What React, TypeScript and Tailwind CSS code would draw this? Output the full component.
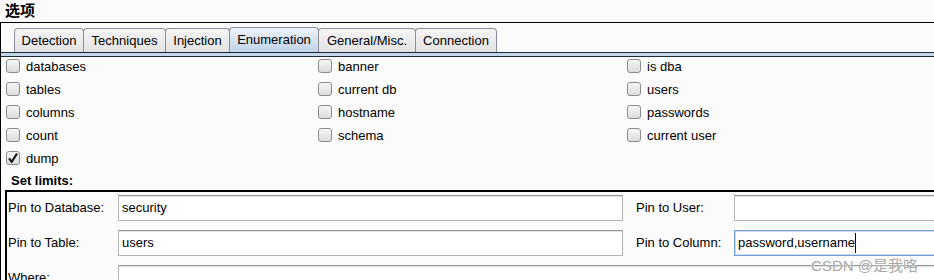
import React from "react"

const tabs = [
  { name: "Detection", w: "w-[70px]" },
  { name: "Techniques", w: "w-[83px]" },
  { name: "Injection", w: "w-[65px]" },
  { name: "Enumeration", w: "w-[90px]", active: true },
  { name: "General/Misc.", w: "w-[98px]" },
  { name: "Connection", w: "w-[82px]" },
]

const rows: [string, string | null, string | null][] = [
  ["databases", "banner", "is dba"],
  ["tables", "current db", "users"],
  ["columns", "hostname", "passwords"],
  ["count", "schema", "current user"],
  ["dump", null, null],
]

function CheckBox({ label, checked }: { label: string; checked?: boolean }) {
  return (
    <div className="flex items-center gap-[6px] h-[18px]">
      <span className="w-[14px] h-[14px] rounded-[3px] border border-[#8a8c90] bg-gradient-to-b from-[#f6f6f6] to-[#dcdcdc] flex items-center justify-center">
        {checked && (
          <svg width="12" height="12" viewBox="0 0 12 12">
            <path d="M2 6.4 L4.7 9.8 L10 1.6" fill="none" stroke="#151515" strokeWidth="2.1" />
          </svg>
        )}
      </span>
      <span className="text-[13px] leading-none text-black">{label}</span>
    </div>
  )
}

function Field({ value, focused, wide }: { value?: string; focused?: boolean; wide?: boolean }) {
  return (
    <div
      className={`h-[26px] bg-white flex items-center pl-[3px] text-[13px] text-black ${wide ? "col-span-3" : ""} ${
        focused
          ? "border border-[#6f9fd5] shadow-[inset_0_0_0_1px_#c9dcf0]"
          : "border border-[#b4b4b4] border-t-[#959595] shadow-[inset_0_1px_0_#e2e2e2]"
      }`}
    >
      <span className="whitespace-nowrap">{value}</span>
      {focused && <span className="w-px h-[20px] bg-black" />}
    </div>
  )
}

export default function App() {
  return (
    <div
      className="relative w-[934px] h-[280px] overflow-hidden bg-[#fbfbfb] text-black"
      style={{ fontFamily: '"Liberation Sans", Arial, "Noto Sans CJK SC", sans-serif' }}
    >
      <div className="h-[22px] pl-[5px] pt-[2px] text-[15px] font-bold leading-[18px]">选项</div>

      <div className="border-t border-l border-black">
        {/* tab strip */}
        <div className="h-[29px] flex items-end pl-[13px]">
          {tabs.map((t) => (
            <div
              key={t.name}
              className={`${t.w} -ml-px first:ml-0 flex items-center justify-center text-[13px] border border-b-0 border-[#8b8e96] rounded-t-[4px] ${
                t.active
                  ? "bg-gradient-to-b from-[#eef3f9] to-[#bfd3e8] h-[25px]"
                  : "bg-gradient-to-b from-[#f5f5f5] to-[#e2e2e2] h-[24px]"
              }`}
            >
              {t.name}
            </div>
          ))}
        </div>
        <div className="h-[5px] border-y border-[#1d2838] bg-[#c4d6e9]" />

        {/* enumeration options */}
        <div className="grid grid-cols-[312px_309px_1fr] gap-y-[5px] pl-[5px]">
          {rows.map(([a, b, c]) => (
            <React.Fragment key={a}>
              <CheckBox label={a} checked={a === "dump"} />
              {b ? <CheckBox label={b} /> : <div />}
              {c ? <CheckBox label={c} /> : <div />}
            </React.Fragment>
          ))}
        </div>

        <div className="h-[23px] pt-[5px] pl-[10px] text-[13px] font-bold leading-[18px]">Set limits:</div>

        <div className="ml-[4px] border-t-2 border-l-2 border-black pt-[3px] pl-[1px]">
          <div className="grid grid-cols-[110px_505px_111px_240px] gap-y-[9px] items-center">
            <span className="text-[13px] whitespace-nowrap">Pin to Database:</span>
            <Field value="security" />
            <span className="text-[13px] pl-[13px] whitespace-nowrap">Pin to User:</span>
            <Field />

            <span className="text-[13px] whitespace-nowrap">Pin to Table:</span>
            <Field value="users" />
            <span className="text-[13px] pl-[13px] whitespace-nowrap">Pin to Column:</span>
            <Field value="password,username" focused />

            <span className="text-[13px] whitespace-nowrap">Where:</span>
            <Field wide />
          </div>
        </div>
      </div>

      <div className="absolute right-[16px] bottom-[7px] text-[15px] leading-none text-[#a8a8a8] [text-shadow:0_0_2px_#ffffff]">
        CSDN @是我咯
      </div>
    </div>
  )
}
